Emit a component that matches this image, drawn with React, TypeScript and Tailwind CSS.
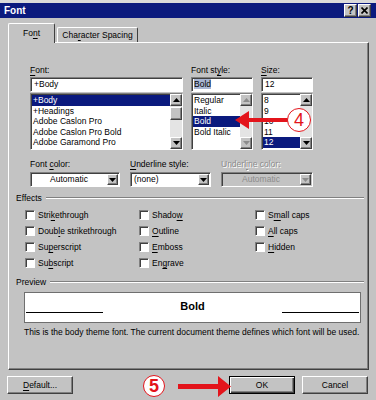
import type { ReactNode } from 'react'

function U({ children }: { children: ReactNode }) {
  return <span className="underline decoration-1 underline-offset-[1.5px]">{children}</span>
}

function Raised({ className = '', children }: { className?: string; children?: ReactNode }) {
  return (
    <div
      className={`flex items-center justify-center border border-t-white border-l-white border-r-[#404040] border-b-[#404040] bg-[#c3c3c3] shadow-[inset_-1px_-1px_0_#808080] ${className}`}
    >
      {children}
    </div>
  )
}

function Sunken({ className = '', children }: { className?: string; children?: ReactNode }) {
  return (
    <div
      className={`border border-t-[#808080] border-l-[#808080] border-r-white border-b-white shadow-[inset_1px_1px_0_#404040] ${className}`}
    >
      {children}
    </div>
  )
}

function Tri({ up, dim }: { up?: boolean; dim?: boolean }) {
  return (
    <svg width="7" height="4" viewBox="0 0 7 4">
      <path d={up ? 'M0 4h7L3.5 0z' : 'M0 0h7L3.5 4z'} fill={dim ? '#8c8c8c' : '#000'} />
    </svg>
  )
}

function ScrollBar({ thumb, dim }: { thumb?: boolean; dim?: boolean }) {
  return (
    <div className="flex w-[12px] flex-col bg-[#e4e4e4]">
      <Raised className="h-[12px] w-[12px]">
        <Tri up dim={dim} />
      </Raised>
      <div className="flex-1 pt-[1px]">{thumb && <Raised className="h-[13px] w-[12px]" />}</div>
      <Raised className="h-[12px] w-[12px]">
        <Tri dim={dim} />
      </Raised>
    </div>
  )
}

function ListBox({ items, selected, thumb, dim }: { items: string[]; selected: number; thumb?: boolean; dim?: boolean }) {
  return (
    <Sunken className="mt-[1px] flex h-[57px] bg-white">
      <div className="flex-1 overflow-hidden pt-[1px] pl-[1px]">
        {items.map((t, i) => (
          <div
            key={t}
            className={`h-[10.5px] pl-[1px] leading-[10.5px] whitespace-nowrap ${i === selected ? 'bg-[#0b1a7e] text-white' : ''}`}
          >
            {t}
          </div>
        ))}
      </div>
      <ScrollBar thumb={thumb} dim={dim} />
    </Sunken>
  )
}

function Combo({ w, text, center, disabled }: { w: string; text: string; center?: boolean; disabled?: boolean }) {
  return (
    <Sunken className={`flex h-[15px] items-center ${w} ${disabled ? 'bg-[#c3c3c3] text-[#8c8c8c]' : 'bg-white'}`}>
      <span className={`flex-1 px-[3px] leading-[13px] ${center ? 'text-center' : ''}`}>{text}</span>
      <Raised className="mr-[1px] h-[11px] w-[11px]">
        <Tri dim={disabled} />
      </Raised>
    </Sunken>
  )
}

function Check({ label }: { label: ReactNode }) {
  return (
    <div className="flex h-[16px] items-center gap-[3px]">
      <div className="h-[10px] w-[10px] border border-t-[#808080] border-l-[#808080] border-r-white border-b-white bg-white shadow-[inset_1px_1px_0_#404040]" />
      <span>{label}</span>
    </div>
  )
}

function GroupHeader({ title }: { title: string }) {
  return (
    <div className="flex h-[10px] items-center">
      <span className="leading-[10px]">{title}</span>
      <div className="ml-[4px] h-[2px] flex-1 border-t border-b border-t-[#808080] border-b-white" />
    </div>
  )
}

export default function App() {
  return (
    <div className="relative h-[400px] w-[376px] overflow-hidden bg-[#c3c3c3] font-['Liberation_Sans',Arial,sans-serif] text-[8.5px] leading-[11px] text-black">
      <div className="h-[3px] bg-[#dadada]" />

      {/* Title bar */}
      <div className="flex h-[15px] items-center bg-[#0b1a7e] pr-[5px] pl-[4px]">
        <span className="text-[10px] leading-none font-bold text-white">Font</span>
        <div className="ml-auto flex gap-[1px]">
          <Raised className="h-[13px] w-[13px] text-[10px] leading-none font-bold">?</Raised>
          <Raised className="h-[13px] w-[13px]">
            <svg width="7" height="7" viewBox="0 0 7 7">
              <path d="M0.5 0.5L6.5 6.5M6.5 0.5L0.5 6.5" stroke="#000" strokeWidth="1.6" />
            </svg>
          </Raised>
        </div>
      </div>

      <div className="px-[8px] pt-[5px]">
        {/* Tabs */}
        <div className="relative z-10 flex items-end">
          <div className="-mb-px flex h-[20px] w-[47px] items-center justify-center rounded-t-[2px] border-t border-r border-l border-t-white border-r-[#404040] border-l-white bg-[#c3c3c3]">
            Fo<U>n</U>t
          </div>
          <div className="ml-[2px] flex h-[15px] w-[81px] items-center justify-center rounded-t-[2px] border-t border-r border-l border-t-white border-r-[#404040] border-l-white">
            Cha<U>r</U>acter Spacing
          </div>
        </div>

        {/* Tab panel */}
        <div className="h-[328px] w-[361px] border border-t-white border-r-[#404040] border-b-[#404040] border-l-white shadow-[inset_-1px_-1px_0_#808080]">
          <div className="pt-[22px] pr-[4px] pl-[7px]">
            {/* Font / style / size */}
            <div className="ml-[14px] flex gap-[8px]">
              <div className="flex w-[153px] flex-col">
                <div className="h-[12px]">
                  <U>F</U>ont:
                </div>
                <Sunken className="h-[15px] bg-white px-[3px] leading-[13px]">+Body</Sunken>
                <ListBox
                  items={['+Body', '+Headings', 'Adobe Caslon Pro', 'Adobe Caslon Pro Bold', 'Adobe Garamond Pro']}
                  selected={0}
                  thumb
                />
              </div>
              <div className="flex w-[62px] flex-col">
                <div className="h-[12px]">
                  Font st<U>y</U>le:
                </div>
                <Sunken className="h-[15px] bg-white px-[2px] leading-[13px]">
                  <span className="bg-[#a9b6d3]">Bold</span>
                </Sunken>
                <ListBox items={['Regular', 'Italic', 'Bold', 'Bold Italic']} selected={2} dim />
              </div>
              <div className="flex w-[52px] flex-col">
                <div className="h-[12px]">
                  <U>S</U>ize:
                </div>
                <Sunken className="h-[15px] bg-white px-[3px] leading-[13px]">12</Sunken>
                <ListBox items={['8', '9', '10', '11', '12']} selected={4} />
              </div>
            </div>

            {/* Color / underline */}
            <div className="mt-[9px] ml-[14px] flex gap-[10px]">
              <div className="flex flex-col">
                <div className="h-[13px]">
                  Font <U>c</U>olor:
                </div>
                <Combo w="w-[90px]" text="Automatic" center />
              </div>
              <div className="flex flex-col">
                <div className="h-[13px]">
                  <U>U</U>nderline style:
                </div>
                <Combo w="w-[81px]" text="(none)" />
              </div>
              <div className="flex flex-col">
                <div className="h-[13px] text-[#8c8c8c] [text-shadow:1px_1px_0_#ffffff]">
                  Underl<U>i</U>ne color:
                </div>
                <Combo w="w-[92px]" text="Automatic" center disabled />
              </div>
            </div>

            {/* Effects */}
            <div className="mt-[6px]">
              <GroupHeader title="Effects" />
            </div>
            <div className="mt-[4px] ml-[9px] flex">
              <div className="w-[114px]">
                <Check label={<>Stri<U>k</U>ethrough</>} />
                <Check label={<>Doub<U>l</U>e strikethrough</>} />
                <Check label={<>Su<U>p</U>erscript</>} />
                <Check label={<>Su<U>b</U>script</>} />
              </div>
              <div className="w-[116px]">
                <Check label={<>Shado<U>w</U></>} />
                <Check label={<><U>O</U>utline</>} />
                <Check label={<><U>E</U>mboss</>} />
                <Check label={<>En<U>g</U>rave</>} />
              </div>
              <div>
                <Check label={<>S<U>m</U>all caps</>} />
                <Check label={<><U>A</U>ll caps</>} />
                <Check label={<><U>H</U>idden</>} />
              </div>
            </div>

            {/* Preview */}
            <div className="mt-[6px]">
              <GroupHeader title="Preview" />
            </div>
            <div className="mt-[5px] ml-[8px] flex h-[31px] w-[337px] items-end border border-[#6f6f6f] bg-white pb-[9px]">
              <div className="ml-[1px] h-px w-[77px] bg-black" />
              <div className="flex-1 text-center text-[11px] leading-[13px] font-bold">Bold</div>
              <div className="mr-[1px] h-px w-[77px] bg-black" />
            </div>
            <div className="mt-[4px] ml-[8px] whitespace-nowrap">
              This is the body theme font. The current document theme defines which font will be used.
            </div>
          </div>
        </div>

        {/* Buttons */}
        <div className="mt-[6px] flex">
          <Raised className="-ml-px h-[18px] w-[66px]">
            <span>
              <U>D</U>efault...
            </span>
          </Raised>
          <div className="ml-auto flex h-[18px] w-[66px] items-center justify-center border border-black bg-[#c3c3c3] shadow-[inset_1px_1px_0_#ffffff,inset_-1px_-1px_0_#404040,inset_-2px_-2px_0_#808080]">
            OK
          </div>
          <Raised className="ml-[7px] h-[18px] w-[66px]">Cancel</Raised>
        </div>
      </div>

      {/* Annotations */}
      <svg className="pointer-events-none absolute top-0 left-0" width="376" height="400">
        <path d="M288 118H249V111L235 120L249 129V122H288Z" fill="#e3141b" />
        <path d="M178 384H218V376L231 386.5L218 397V389H178Z" fill="#e3141b" />
      </svg>
      <div className="absolute top-[108px] left-[287px] flex h-[24px] w-[24px] items-center justify-center rounded-full border-[1.5px] border-[#e3141b] bg-white text-[18px] leading-none text-[#e3141b]">
        4
      </div>
      <div className="absolute top-[375px] left-[143px] flex h-[22px] w-[22px] items-center justify-center rounded-full border-[1.5px] border-[#e3141b] bg-white text-[18px] leading-none font-semibold text-[#e3141b]">
        5
      </div>
    </div>
  )
}
